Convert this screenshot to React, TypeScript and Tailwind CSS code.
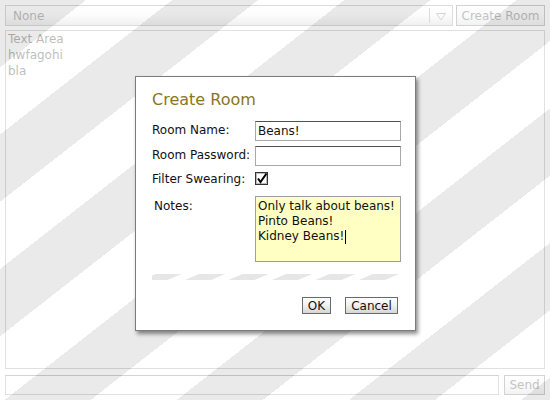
import React from "react";

const font = "font-['DejaVu_Sans','Liberation_Sans',sans-serif]";

function Button({ label, className = "" }: { label: string; className?: string }) {
  return (
    <div
      className={`flex items-center justify-center border border-[#6a6a6a] bg-[linear-gradient(#ffffff,#f2f2f2_45%,#d6d6d6)] text-[12px] leading-none text-[#111] ${className}`}
    >
      {label}
    </div>
  );
}

function Separator() {
  const segs = [0, 1, 2, 3, 4, 5, 6];
  return (
    <svg width="248" height="6" viewBox="0 0 248 6" className="block">
      {segs.map((i) => {
        const x = -10.5 + i * 43.5;
        return <polygon key={i} points={`${x},6 ${x + 14},0 ${x + 40},0 ${x + 26},6`} fill="#e6e6e6" />;
      })}
    </svg>
  );
}

function Dialog() {
  return (
    <div className="absolute left-[135px] top-[76px] flex h-[255px] w-[281px] flex-col border border-[#7c7c7c] bg-white pl-[16px] pt-[13px] text-[12px] text-[#111] shadow-[2px_3px_4px_rgba(0,0,0,0.45)]">
      <h1 className="h-[20px] text-[16px] leading-[20px] text-[#8a7624]">Create Room</h1>
      <div className="mt-[11px] flex h-[20px] items-center">
        <span className="w-[103px] -translate-y-[1px]">Room Name:</span>
        <div className="flex h-[20px] w-[146px] items-center border border-[#a8a8a8] border-t-[#505050] pl-[2px]">Beans!</div>
      </div>
      <div className="mt-[5px] flex h-[20px] items-center">
        <span className="w-[103px] -translate-y-[1px]">Room Password:</span>
        <div className="h-[20px] w-[146px] border border-[#a8a8a8] border-t-[#505050]" />
      </div>
      <div className="mt-[6px] flex h-[14px] items-center">
        <span className="w-[103px]">Filter Swearing:</span>
        <svg width="14" height="14" viewBox="0 0 14 14" className="block">
          <rect x="0.5" y="0.5" width="12" height="12" fill="#fff" stroke="#333" />
          <rect x="1.5" y="1.5" width="10" height="10" fill="none" stroke="#bbb" />
          <path d="M3 6.5 L5.5 10 L11.5 1.5" fill="none" stroke="#000" strokeWidth="2" />
        </svg>
      </div>
      <div className="mt-[10px] flex">
        <span className="w-[103px] pl-[2px] pt-[1px]">Notes:</span>
        <div className="h-[66px] w-[146px] border border-[#a0a0a0] bg-[#ffffc4] pl-[2px] pt-[2px] leading-[15px]">
          <div>Only talk about beans!</div>
          <div>Pinto Beans!</div>
          <div className="flex items-center">
            Kidney Beans!<span className="ml-[1px] inline-block h-[14px] w-[1px] bg-black" />
          </div>
        </div>
      </div>
      <div className="mt-[12px]">
        <Separator />
      </div>
      <div className="mt-[17px] flex gap-[14px] pl-[150px]">
        <Button label="OK" className="h-[17px] w-[29px]" />
        <Button label="Cancel" className="h-[17px] w-[53px]" />
      </div>
    </div>
  );
}

export default function App() {
  return (
    <div className={`relative h-[400px] w-[550px] overflow-hidden bg-white ${font}`}>
      <div className="flex h-full flex-col px-[5px] pt-[5px] text-[12px]">
        <div className="flex h-[21px] gap-[3px]">
          <div className="flex flex-1 items-center border border-[#8a8a8a] bg-[linear-gradient(#ffffff,#f4f4f4_50%,#cfcfcf)]">
            <span className="flex-1 pl-[7px] text-[#333]">None</span>
            <div className="h-[15px] w-px bg-[#8a8a8a]" />
            <svg width="22" height="12" viewBox="0 0 22 12" className="block">
              <path d="M6.5 3.5 L15.5 3.5 L11 10 Z" fill="none" stroke="#777" />
            </svg>
          </div>
          <Button label="Create Room" className="w-[89px] text-[12px] text-[#333]" />
        </div>
        <div className="mt-[4px] h-[339px] border border-[#9a9a9a] bg-white pl-[2px] text-[12px] leading-[16px] text-[#222]">
          <div>Text Area</div>
          <div>hwfagohi</div>
          <div>bla</div>
        </div>
        <div className="mt-[6px] flex h-[20px] gap-[5px]">
          <div className="flex-1 border border-[#9a9a9a] border-t-[#707070] bg-white" />
          <Button label="Send" className="w-[41px] text-[#333]" />
        </div>
      </div>
      <div className="absolute inset-0 bg-[repeating-linear-gradient(142deg,rgba(225,225,225,0.7)_0px,rgba(225,225,225,0.7)_53px,rgba(255,255,255,0.7)_53px,rgba(255,255,255,0.7)_106px)]" />
      <Dialog />
    </div>
  );
}
